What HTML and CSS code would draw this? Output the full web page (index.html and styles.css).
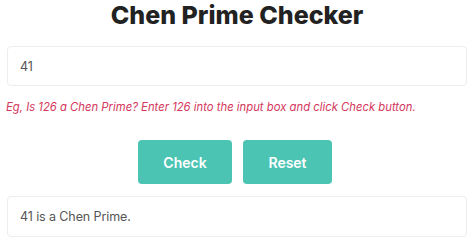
FILE: index.html
```html
<!DOCTYPE html>
<html>
<head>
<meta charset="utf-8">
<link rel="stylesheet" href="styles.css">
</head>
<body>
<div class="wrap">
  <h1 class="title">Chen Prime Checker</h1>
  <div class="field">41</div>
  <p class="hint">Eg, Is 126 a Chen Prime? Enter 126 into the input box and click Check button.</p>
  <div class="actions">
    <button class="btn btn-check">Check</button>
    <button class="btn btn-reset">Reset</button>
  </div>
  <div class="result">41 is a Chen Prime.</div>
</div>
</body>
</html>
```
FILE: styles.css
```css
html, body {
  margin: 0;
  padding: 0;
  background: #ffffff;
}
body {
  font-family: "Inter", "Noto Sans", sans-serif;
  width: 474px;
  height: 244px;
  overflow: hidden;
}
.wrap {
  padding: 0 7px;
  display: flex;
  flex-direction: column;
}
.title {
  margin: 0;
  height: 34px;
  line-height: 30px;
  font-size: 25px;
  font-weight: 800;
  color: #222222;
  text-align: center;
  letter-spacing: 0;
}
.field, .result {
  margin-top: 12px;
  height: 40px;
  box-sizing: border-box;
  border: 1px solid #ededed;
  border-radius: 4px;
  background: #fff;
  padding: 0 12px;
  display: flex;
  align-items: center;
  font-size: 12.5px;
  color: #555555;
}
.hint {
  margin: 11px 0 0 -1px;
  height: 20px;
  line-height: 20px;
  font-size: 11.3px;
  font-style: italic;
  color: #d4365c;
  white-space: nowrap;
}
.actions {
  margin-top: 23px;
  display: flex;
  justify-content: center;
  gap: 11px;
  padding-right: 4px;
}
.btn {
  height: 44px;
  border: none;
  border-radius: 4px;
  background: #4cc4b3;
  color: #ffffff;
  font-family: "Inter", "Noto Sans", sans-serif;
  font-size: 14px;
  font-weight: 600;
  padding: 0;
}
.btn-check { width: 94px; }
.btn-reset { width: 89px; }
.result {
  margin-top: 12px;
  height: 41px;
  letter-spacing: -0.1px;
}
```
